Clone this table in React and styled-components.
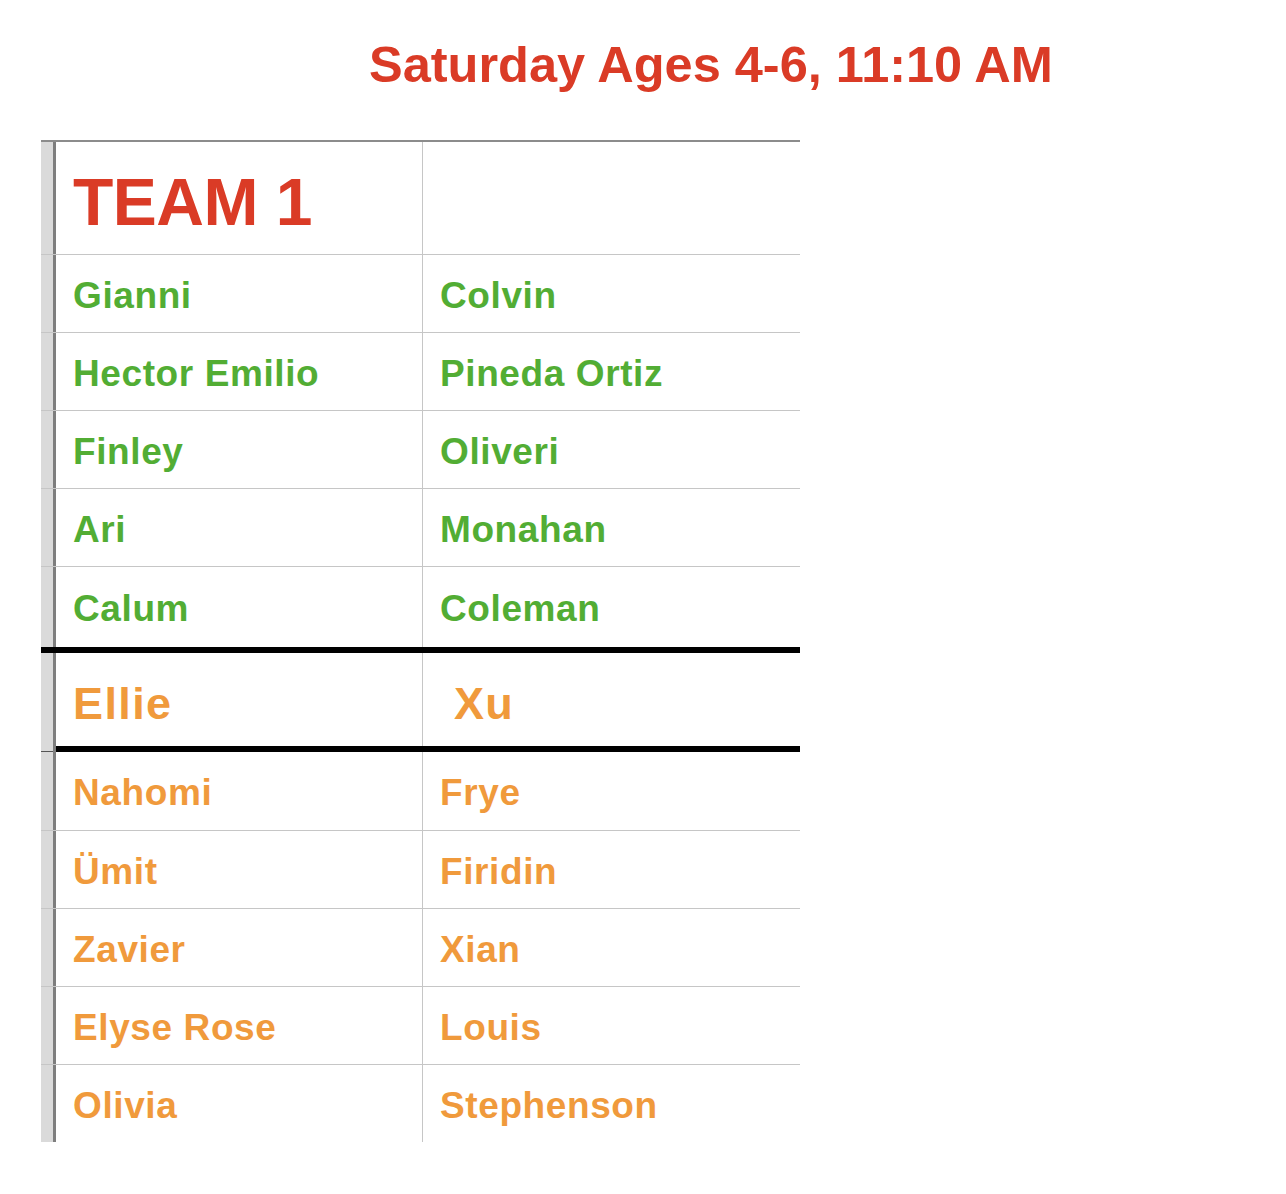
import React from 'react';
import styled, { createGlobalStyle } from 'styled-components';

const colors = {
    red: '#da3b26',
    green: '#52ad34',
    orange: '#f09a3c',
    strip: '#dadada',
    stripLine: '#7e7e7e',
    grid: '#c6c6c6',
}

const team = [
    ['Gianni', 'Colvin'],
    ['Hector Emilio', 'Pineda Ortiz'],
    ['Finley', 'Oliveri'],
    ['Ari', 'Monahan'],
    ['Calum', 'Coleman'],
]

const orangeKids = [
    ['Nahomi', 'Frye'],
    ['Ümit', 'Firidin'],
    ['Zavier', 'Xian'],
    ['Elyse Rose', 'Louis'],
    ['Olivia', 'Stephenson'],
]

export default function App() {
    return (
        <>
            <GlobalStyle />
            <Page>
                <Heading>Saturday Ages 4-6, 11:10 AM</Heading>
                <Sheet>
                    <Row height={112} line="thin">
                        <Gutter />
                        <Cell first>
                            <TeamTitle>TEAM 1</TeamTitle>
                        </Cell>
                        <Cell />
                    </Row>

                    {team.map(([first, last], i) => (
                        <Row
                            key={first}
                            height={i === team.length - 1 ? 80 : 77}
                            line={i === team.length - 1 ? 'thick' : 'thin'}
                        >
                            <Gutter />
                            <Cell first><Name color={colors.green}>{first}</Name></Cell>
                            <Cell><Name color={colors.green}>{last}</Name></Cell>
                        </Row>
                    ))}

                    <Row height={93} line="thick" gutterLine="dark">
                        <Gutter />
                        <Cell first><Leader>Ellie</Leader></Cell>
                        <Cell><Leader> Xu</Leader></Cell>
                    </Row>

                    {orangeKids.map(([first, last], i) => (
                        <Row
                            key={first}
                            height={i === 0 ? 78 : 77}
                            line={i === orangeKids.length - 1 ? 'none' : 'thin'}
                        >
                            <Gutter />
                            <Cell first><Name color={colors.orange}>{first}</Name></Cell>
                            <Cell><Name color={colors.orange}>{last}</Name></Cell>
                        </Row>
                    ))}
                </Sheet>
            </Page>
        </>
    )
}

const GlobalStyle = createGlobalStyle`
    html, body {
        margin: 0;
        padding: 0;
        background: #ffffff;
        font-family: "Liberation Sans", Arial, Helvetica, sans-serif;
    }
`

const Page = styled.div`
    width: 1286px;
    min-height: 1194px;
    padding-top: 40px;
    box-sizing: border-box;
`

const Heading = styled.h1`
    margin: 0 0 0 369px;
    font-size: 50.5px;
    line-height: 1;
    font-weight: 700;
    color: ${colors.red};
    white-space: nowrap;
`

const Sheet = styled.div`
    margin: 49px 0 0 41px;
    width: 759px;
    border-top: 2px solid #8c8c8c;
    display: flex;
    flex-direction: column;
`

const lineStyles = {
    thin: `1px solid ${colors.grid}`,
    thick: '6px solid #000000',
    none: 'none',
}

const Row = styled.div`
    display: grid;
    grid-template-columns: 15px 367px 1fr;
    height: ${props => props.height}px;
    border-bottom: ${props => lineStyles[props.line]};
    box-sizing: content-box;

    ${props => props.gutterLine === 'dark' && `
        & > div:first-child {
            box-shadow: inset 0 -1px 0 #555555;
            margin-bottom: -6px;
            height: calc(100% + 6px);
        }
    `}
`

const Gutter = styled.div`
    background: ${colors.strip};
    border-right: 3px solid ${colors.stripLine};
    box-sizing: border-box;
    position: relative;
    z-index: 1;
`

const Cell = styled.div`
    display: flex;
    align-items: center;
    padding-left: 17px;
    border-right: ${props => (props.first ? `1.5px solid ${colors.grid}` : 'none')};
    min-width: 0;
`

const TeamTitle = styled.span`
    font-size: 66px;
    line-height: 1;
    font-weight: 700;
    color: ${colors.red};
    padding-top: 8px;
    letter-spacing: -0.5px;
`

const Name = styled.span`
    font-size: 37px;
    line-height: 1;
    font-weight: 700;
    color: ${props => props.color};
    letter-spacing: 0.6px;
    padding-top: 4px;
    white-space: pre;
`

const Leader = styled.span`
    font-size: 45px;
    line-height: 1;
    font-weight: 700;
    color: ${colors.orange};
    letter-spacing: 1.4px;
    padding-top: 8px;
    white-space: pre;
`
